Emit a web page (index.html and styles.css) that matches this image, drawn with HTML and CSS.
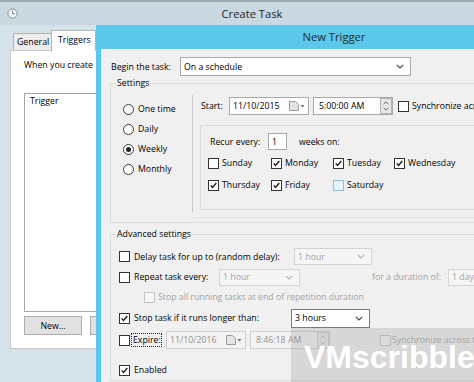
FILE: index.html
```html
<!DOCTYPE html>
<html lang="en">

<head>
    <meta charset="UTF-8">
    <meta name="viewport" content="width=device-width, initial-scale=1.0">
    <title>Create Task - New Trigger</title>
    <link rel="stylesheet" href="styles.css">
</head>

<body>

    <svg class="sprite" xmlns="http://www.w3.org/2000/svg">
        <symbol id="chev" viewBox="0 0 8 5">
            <path d="M0.8 0.8 L4 4 L7.2 0.8" fill="none" stroke="currentColor" stroke-width="1.2" />
        </symbol>
        <symbol id="tick" viewBox="0 0 11 11">
            <path d="M2.1 5.3 L4.3 7.8 L8.9 2.4" fill="none" stroke="#1a1a1a" stroke-width="1.7" />
        </symbol>
        <symbol id="cal" viewBox="0 0 16 10">
            <path d="M0.5 0.5 H6.5 L9.5 3.5 V9.5 H0.5 Z" fill="#e4e4e4" stroke="#9c9c9c" />
            <path d="M11.5 4 H15.5 L13.5 6.5 Z" fill="#6d6d6d" />
        </symbol>
    </svg>

    <div class="desk">

        <!-- Create Task, behind -->
        <div class="back">
            <div class="back-title">
                <svg class="clock" viewBox="0 0 11 11">
                    <circle cx="5.5" cy="5.5" r="4.6" fill="#f2f2f2" stroke="#8a949b" />
                    <path d="M5.5 2.6 V5.7 H7.8" fill="none" stroke="#6c767d" stroke-width="0.9" />
                </svg>
                <span class="caption">Create Task</span>
            </div>
            <div class="back-body">
                <div class="tabs">
                    <div class="tab">General</div>
                    <div class="tab on">Triggers</div>
                </div>
                <div class="pane">
                    <p class="intro">When you create</p>
                    <div class="list">
                        <div class="list-head">Trigger</div>
                    </div>
                    <div class="btns">
                        <button class="btn">New...</button>
                        <button class="btn" aria-label="Edit"></button>
                    </div>
                </div>
            </div>
        </div>

        <!-- New Trigger, in front -->
        <div class="front">
            <div class="front-title">New Trigger</div>
            <div class="front-body">

                <div class="begin">
                    <span class="lbl-begin">Begin the task:</span>
                    <div class="combo wide">On a schedule<svg class="arrow"><use href="#chev" /></svg></div>
                </div>

                <fieldset class="group settings">
                    <legend>Settings</legend>
                    <div class="settings-in">
                        <div class="freq">
                            <div class="opt"><span class="rd"></span>One time</div>
                            <div class="opt"><span class="rd"></span>Daily</div>
                            <div class="opt"><span class="rd on"></span>Weekly</div>
                            <div class="opt"><span class="rd"></span>Monthly</div>
                        </div>
                        <div class="sched">
                            <div class="start-row">
                                <span class="lbl-start">Start:</span>
                                <div class="field date">11/10/2015<svg class="cal"><use href="#cal" /></svg></div>
                                <div class="field time">5:00:00 AM
                                    <span class="spin">
                                        <svg class="up"><use href="#chev" /></svg>
                                        <svg><use href="#chev" /></svg>
                                    </span>
                                </div>
                                <span class="cb"></span>
                                <span class="sync">Synchronize across time zones</span>
                            </div>
                            <div class="recur">
                                <div class="recur-row">
                                    <span class="lbl-recur">Recur every:</span>
                                    <div class="field num">1</div>
                                    <span class="weeks">weeks on:</span>
                                </div>
                                <div class="days">
                                    <div class="day"><span class="cb"></span>Sunday</div>
                                    <div class="day"><span class="cb"><svg><use href="#tick" /></svg></span>Monday</div>
                                    <div class="day"><span class="cb"><svg><use href="#tick" /></svg></span>Tuesday</div>
                                    <div class="day"><span class="cb"><svg><use href="#tick" /></svg></span>Wednesday</div>
                                    <div class="day"><span class="cb"><svg><use href="#tick" /></svg></span>Thursday</div>
                                    <div class="day"><span class="cb"><svg><use href="#tick" /></svg></span>Friday</div>
                                    <div class="day"><span class="cb hover"></span>Saturday</div>
                                </div>
                            </div>
                        </div>
                    </div>
                </fieldset>

                <fieldset class="group advanced">
                    <legend>Advanced settings</legend>
                    <div class="rows">
                        <div class="row r-delay">
                            <span class="cb"></span>
                            <span class="lbl-delay">Delay task for up to (random delay):</span>
                            <div class="combo off c-delay">1 hour<svg class="arrow"><use href="#chev" /></svg></div>
                        </div>
                        <div class="row r-repeat">
                            <span class="cb"></span>
                            <span class="lbl-repeat">Repeat task every:</span>
                            <div class="combo off c-repeat">1 hour<svg class="arrow"><use href="#chev" /></svg></div>
                            <span class="lbl-dur dim">for a duration of:</span>
                            <div class="combo off c-dur">1 day<svg class="arrow"><use href="#chev" /></svg></div>
                        </div>
                        <div class="row r-stopall dim">
                            <span class="cb off"></span>
                            <span>Stop all running tasks at end of repetition duration</span>
                        </div>
                        <div class="row r-stop">
                            <span class="cb"><svg><use href="#tick" /></svg></span>
                            <span class="lbl-stop">Stop task if it runs longer than:</span>
                            <div class="combo c-stop">3 hours<svg class="arrow"><use href="#chev" /></svg></div>
                        </div>
                        <div class="row r-expire">
                            <span class="cb"></span>
                            <span class="focus">Expire:</span>
                            <div class="field date off">11/10/2016<svg class="cal"><use href="#cal" /></svg></div>
                            <div class="field time off">8:46:18 AM
                                <span class="spin">
                                    <svg class="up"><use href="#chev" /></svg>
                                    <svg><use href="#chev" /></svg>
                                </span>
                            </div>
                            <span class="cb off sync-cb"></span>
                            <span class="dim">Synchronize across time zones</span>
                        </div>
                        <div class="row r-enabled">
                            <span class="cb"><svg><use href="#tick" /></svg></span>
                            <span>Enabled</span>
                        </div>
                    </div>
                </fieldset>

            </div>
        </div>

        <div class="mark">VMscribble</div>

    </div>

</body>

</html>
```

FILE: styles.css
```css
*,
*::after,
*::before {
    margin: 0;
    padding: 0;
    box-sizing: border-box;
}

body {
    width: 474px;
    height: 382px;
    overflow: hidden;
    background: #d6e2ea;
    font-family: "Open Sans", "Noto Sans", sans-serif;
    font-size: 8.75px;
    color: #000;
    white-space: nowrap;
}

.sprite {
    display: block;
    width: 0;
    height: 0;
}

.desk {
    position: relative;
    width: 474px;
    height: 382px;
    overflow: hidden;
}

/* back window */
.back {
    position: absolute;
    left: 0;
    top: 0;
    width: 504px;
    height: 382px;
    background: #d6e2ea;
}

.back-title {
    height: 25px;
    border-top: 2px solid #9ba7af;
    background: #cad8e1;
    display: grid;
    grid-template-columns: 1fr auto 1fr;
    align-items: center;
}

.clock {
    width: 11px;
    height: 11px;
    margin-left: 7px;
}

.caption {
    font-size: 11.2px;
    color: #222;
}

/* only the strip left of the New Trigger window shows */
.back-body {
    width: 96px;
    overflow: hidden;
}

.tabs {
    width: 200px;
    height: 25px;
    padding-left: 13px;
    display: flex;
    align-items: flex-end;
}

.tab {
    width: 39px;
    height: 17px;
    padding-left: 3px;
    line-height: 16px;
    background: #ececec;
    border: 1px solid #b4b4b4;
    border-bottom: none;
}

.tab.on {
    position: relative;
    z-index: 1;
    width: 45px;
    height: 21px;
    margin-left: -1px;
    margin-bottom: -1px;
    padding-left: 6px;
    line-height: 18px;
    background: #fff;
}

.pane {
    width: 300px;
    margin-left: 10px;
    height: 299px;
    padding: 8px 0 0 13px;
    background: #fff;
    border: 1px solid #c8c8c8;
}

.intro {
    line-height: 12px;
}

.list {
    width: 200px;
    height: 219px;
    margin-top: 22px;
    border: 1px solid #a6a6a6;
}

.list-head {
    padding-left: 5px;
    line-height: 14px;
}

.btns {
    margin-top: 4px;
    display: flex;
    gap: 8px;
}

.btn {
    width: 58px;
    height: 19px;
    font: inherit;
    background: #e1e1e1;
    border: 1px solid #adadad;
}

/* front window */
.front {
    position: absolute;
    left: 96px;
    top: 25px;
    width: 476px;
    height: 357px;
    display: flex;
    flex-direction: column;
    background: #5bc7ea;
}

.front-title {
    height: 24px;
    line-height: 24px;
    text-align: center;
    font-size: 11.2px;
    color: #1c2a30;
}

.front-body {
    flex: 1;
    margin-left: 5px;
    background: #f0f0f0;
}

.begin {
    margin-top: 8px;
    height: 19px;
    padding-left: 10px;
    display: flex;
    align-items: center;
}

.lbl-begin {
    width: 69px;
}

.combo {
    height: 17px;
    padding: 0 6px 0 3px;
    display: flex;
    align-items: center;
    justify-content: space-between;
    background: #fff;
    border: 1px solid #7a7a7a;
    color: #000;
}

.combo.wide {
    width: 231px;
    height: 19px;
    border-color: #a9a9a9;
}

.combo.off {
    background: #f5f5f5;
    border-color: #d4d4d4;
    color: #a3a3a3;
}

.arrow {
    width: 8px;
    height: 5px;
    color: #444;
}

.combo.off .arrow {
    color: #b5b5b5;
}

.group {
    margin-left: 9px;
    border: 1px solid #dcdcdc;
    border-right: none;
}

.group legend {
    margin-left: 5px;
    padding: 0 1px;
    line-height: 12px;
}

.settings {
    margin-top: 1px;
    padding-bottom: 4px;
}

.settings-in {
    display: flex;
    align-items: flex-start;
}

.freq {
    width: 82px;
    height: 117px;
    margin-top: 6px;
    padding: 4px 0 0 12px;
    border-right: 1px solid #c9c9c9;
}

.opt {
    height: 20px;
    display: flex;
    align-items: center;
    gap: 4px;
}

.rd {
    width: 11px;
    height: 11px;
    border: 1px solid #3a3a3a;
    border-radius: 50%;
    background: #fff;
    display: grid;
    place-items: center;
}

.rd.on::after {
    content: "";
    width: 5px;
    height: 5px;
    border-radius: 50%;
    background: #222;
}

.sched {
    flex: 1;
    padding: 0 0 7px 8px;
    border-bottom: 1px solid #e2e2e2;
}

.start-row {
    margin-top: 8px;
    height: 18px;
    display: flex;
    align-items: center;
}

.lbl-start {
    width: 28px;
}

.field {
    height: 18px;
    display: flex;
    align-items: center;
    justify-content: space-between;
    background: #fff;
    border: 1px solid #a9a9a9;
}

.field.date {
    width: 80px;
    margin-right: 4px;
    padding-left: 3px;
}

.field.time {
    width: 80px;
    margin-right: 5px;
    padding-left: 5px;
}

.field.off {
    background: #f3f3f3;
    border-color: #d0d0d0;
    color: #8e8e8e;
}

.cal {
    width: 16px;
    height: 10px;
    margin-right: 3px;
}

.spin {
    width: 12px;
    height: 16px;
    display: flex;
    flex-direction: column;
    align-items: center;
    justify-content: center;
    gap: 2px;
    background: #e8e8e8;
    border: 1px solid #b3b3b3;
    color: #555;
}

.spin svg {
    width: 6px;
    height: 4px;
}

.spin .up {
    transform: rotate(180deg);
}

.field.off .spin {
    color: #b0b0b0;
    border-color: #d0d0d0;
}

.cb {
    flex: none;
    width: 11px;
    height: 11px;
    display: inline-block;
    border: 1px solid #333;
    background: #fff;
}

.cb svg {
    display: block;
    width: 9px;
    height: 9px;
}

.cb.hover {
    border-color: #7fc4e4;
    background: #e5f3fb;
}

.cb.off {
    border-color: #c4c4c4;
    background: #f6f6f6;
}

.start-row .cb {
    margin-right: 3px;
}

.recur {
    margin: 10px 0 0 -1px;
    height: 85px;
    padding-left: 7px;
    border: 1px solid #dcdcdc;
    border-right: none;
}

.recur-row {
    margin: 7px 0 0 2px;
    height: 17px;
    display: flex;
    align-items: center;
}

.lbl-recur {
    width: 58px;
}

.field.num {
    width: 19px;
    height: 17px;
    padding-left: 3px;
}

.weeks {
    margin-left: 12px;
}

.days {
    margin-top: 7px;
    display: grid;
    grid-template-columns: 63px 62px 61px auto;
    grid-auto-rows: 12px;
    row-gap: 10px;
}

.day {
    display: flex;
    align-items: center;
    gap: 3px;
}

.advanced {
    margin-top: 5px;
}

.rows {
    padding: 6px 0 0 8px;
}

.row {
    display: flex;
    align-items: center;
}

.row > .cb {
    margin-right: 4px;
}

.dim {
    color: #a3a3a3;
}

.r-delay {
    height: 21px;
}

.lbl-delay {
    width: 160px;
}

.c-delay {
    width: 78px;
}

.r-repeat {
    height: 20px;
}

.lbl-repeat {
    width: 85px;
}

.c-repeat {
    width: 81px;
}

.lbl-dur {
    width: 76px;
    margin-left: 72px;
}

.c-dur {
    width: 70px;
}

.r-stopall {
    height: 20px;
    padding-left: 25px;
}

.r-stopall .cb {
    margin-right: 3px;
}

.r-stop {
    height: 22px;
}

.lbl-stop {
    width: 157px;
}

.c-stop {
    width: 79px;
    height: 19px;
}

.r-expire {
    height: 22px;
}

.r-expire > .cb {
    margin-right: 1px;
}

.focus {
    width: 31px;
    height: 14px;
    line-height: 12px;
    padding-left: 1px;
    margin-right: 4px;
    border: 1px dotted #222;
}

.r-expire .field.time {
    margin-right: 50px;
}

.r-expire .sync-cb {
    margin-right: 1px;
}

.r-enabled {
    height: 20px;
    margin-top: 9px;
}

/* watermark over the corner */
.mark {
    position: absolute;
    left: 291px;
    top: 328px;
    width: 183px;
    height: 54px;
    padding: 7px 0 0 13px;
    background: rgba(160, 160, 160, 0.3);
    font-family: "Liberation Sans", sans-serif;
    font-weight: bold;
    font-size: 32px;
    line-height: 44px;
    color: #fff;
}
```
